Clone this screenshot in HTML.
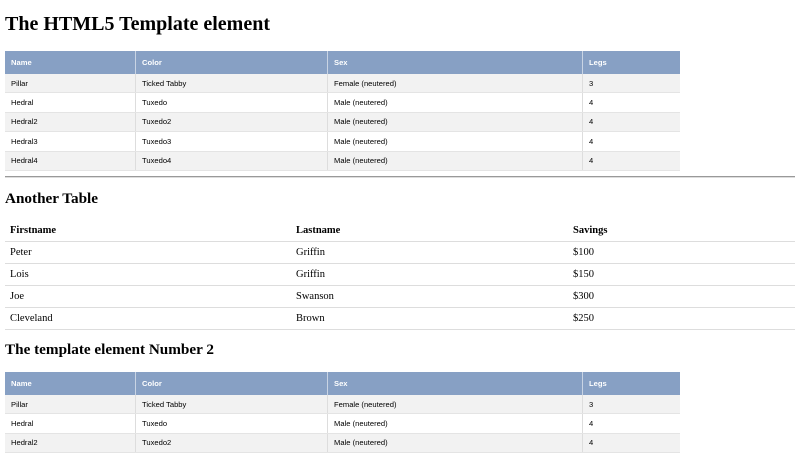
<!DOCTYPE html>
<html><head><style>
body{margin:0;width:800px;height:450px;overflow:hidden;background:#fff;font-family:"Liberation Serif",serif;color:#000;position:relative}
h1,h2{position:absolute;left:5px;margin:0;font-weight:bold;white-space:nowrap}
h1{font-size:20px;top:13px}
h2{font-size:15.2px}
table{position:absolute;left:5px;border-collapse:collapse}
.t1{width:675px;font-family:"Liberation Sans",sans-serif;font-size:7.6px}
.t1 th{background:#87a0c4;color:#fff;text-align:left;height:23px;padding:0 0 0 6px;border-right:1px solid #c9d4e4;font-weight:bold}
.t1 td{height:18.4px;padding:0 0 0 6px;border-right:1px solid #ddd;border-bottom:1px solid #e4e4e4}
.t1 tr:nth-child(even) td{background:#f2f2f2}
.t1 td:last-child,.t1 th:last-child{border-right:none}
.t2{width:790px;font-size:10.5px}
.t2 th{text-align:left;height:21px;padding:0 0 0 5px;border-bottom:1px solid #ddd}
.t2 td{height:21px;padding:0 0 0 5px;border-bottom:1px solid #ddd}
hr{position:absolute;left:5px;top:176px;width:790px;margin:0;border:0;border-top:1px solid #999;border-bottom:1px solid #ddd}
</style></head><body>
<h1>The HTML5 Template element</h1>
<table class="t1" style="top:51px">
<tr><th style="width:124px">Name</th><th style="width:185px">Color</th><th style="width:248px">Sex</th><th>Legs</th></tr>
<tr><td>Pillar</td><td>Ticked Tabby</td><td>Female (neutered)</td><td>3</td></tr>
<tr><td>Hedral</td><td>Tuxedo</td><td>Male (neutered)</td><td>4</td></tr>
<tr><td>Hedral2</td><td>Tuxedo2</td><td>Male (neutered)</td><td>4</td></tr>
<tr><td>Hedral3</td><td>Tuxedo3</td><td>Male (neutered)</td><td>4</td></tr>
<tr><td>Hedral4</td><td>Tuxedo4</td><td>Male (neutered)</td><td>4</td></tr>
</table>
<hr>
<h2 style="top:190px">Another Table</h2>
<table class="t2" style="top:220px">
<tr><th style="width:281px">Firstname</th><th style="width:272px">Lastname</th><th>Savings</th></tr>
<tr><td>Peter</td><td>Griffin</td><td>$100</td></tr>
<tr><td>Lois</td><td>Griffin</td><td>$150</td></tr>
<tr><td>Joe</td><td>Swanson</td><td>$300</td></tr>
<tr><td>Cleveland</td><td>Brown</td><td>$250</td></tr>
</table>
<h2 style="top:341px">The template element Number 2</h2>
<table class="t1" style="top:372px">
<tr><th style="width:124px">Name</th><th style="width:185px">Color</th><th style="width:248px">Sex</th><th>Legs</th></tr>
<tr><td>Pillar</td><td>Ticked Tabby</td><td>Female (neutered)</td><td>3</td></tr>
<tr><td>Hedral</td><td>Tuxedo</td><td>Male (neutered)</td><td>4</td></tr>
<tr><td>Hedral2</td><td>Tuxedo2</td><td>Male (neutered)</td><td>4</td></tr>
</table>
</body></html>
